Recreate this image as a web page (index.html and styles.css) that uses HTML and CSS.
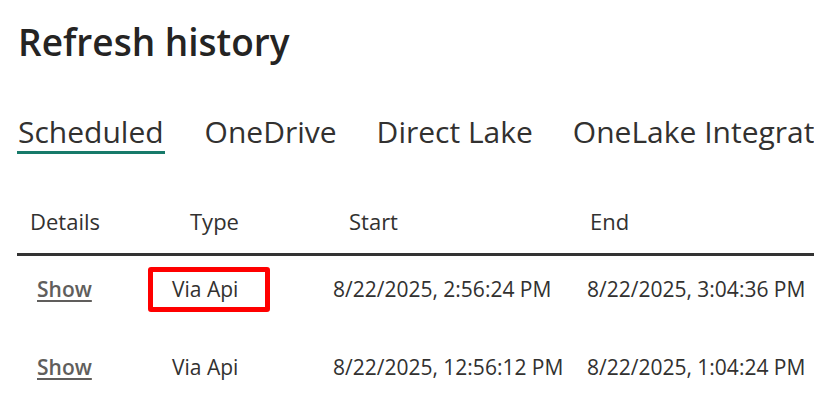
FILE: index.html
```html
<!DOCTYPE html>
<html lang="en">
<head>
<meta charset="utf-8">
<title>Refresh history</title>
<link rel="stylesheet" href="styles.css">
</head>
<body>
<div class="page">
  <h1 class="title">Refresh history</h1>
  <nav class="tabs">
    <span class="tab active">Scheduled</span>
    <span class="tab">OneDrive</span>
    <span class="tab">Direct Lake</span>
    <span class="tab">OneLake Integration</span>
  </nav>
  <div class="table">
    <div class="row head">
      <div class="cell c1">Details</div>
      <div class="cell c2">Type</div>
      <div class="cell c3">Start</div>
      <div class="cell c4">End</div>
    </div>
    <div class="row body">
      <div class="cell c1"><a class="show">Show</a></div>
      <div class="cell c2 marked">Via Api<span class="annot"></span></div>
      <div class="cell c3">8/22/2025, 2:56:24 PM</div>
      <div class="cell c4">8/22/2025, 3:04:36 PM</div>
    </div>
    <div class="row body">
      <div class="cell c1"><a class="show">Show</a></div>
      <div class="cell c2">Via Api</div>
      <div class="cell c3">8/22/2025, 12:56:12 PM</div>
      <div class="cell c4">8/22/2025, 1:04:24 PM</div>
    </div>
  </div>
</div>
</body>
</html>
```
FILE: styles.css
```css
html, body {
  margin: 0;
  padding: 0;
  background: #ffffff;
}
body {
  font-family: "Open Sans", "Noto Sans", sans-serif;
  color: #323130;
  overflow: hidden;
}
.page {
  padding: 18px 0 0 17px;
  white-space: nowrap;
}
.title {
  margin: 0;
  font-size: 37px;
  line-height: 48px;
  font-weight: 600;
  color: #252423;
  padding-left: 1px;
}
.tabs {
  display: flex;
  gap: 38px;
  margin-top: 48px;
}
.tab {
  font-size: 30px;
  line-height: 36px;
  padding: 0 1px 1px;
  border-bottom: 3px solid transparent;
  color: #323130;
  flex-shrink: 0;
}
.tab.active {
  border-bottom-color: #177a6a;
  margin-right: 1px;
}
.table {
  margin-top: 53px;
}
.row {
  display: grid;
  grid-template-columns: 131px 142px 282px 1fr;
  line-height: 28px;
}
.row.head {
  font-size: 22px;
  padding-bottom: 18px;
  border-bottom: 3px solid #333333;
}
.row.body {
  font-size: 21px;
  padding: 19px 0 31px;
}
.head .c1 { padding-left: 13px; }
.head .c2 { padding-left: 42px; }
.head .c3 { padding-left: 59px; }
.head .c4 { padding-left: 18px; }
.body .c1 { padding-left: 20px; }
.body .c2 { padding-left: 24px; }
.body .c3 { padding-left: 43px; }
.body .c4 { padding-left: 15px; }
.show {
  color: #605e5c;
  font-weight: 600;
  text-decoration: underline;
  text-underline-offset: 3px;
}
.marked {
  position: relative;
}
.annot {
  position: absolute;
  left: 0;
  top: -8px;
  width: 122px;
  height: 45px;
  box-sizing: border-box;
  border: 5px solid #ff0000;
  border-radius: 3px;
}
```
